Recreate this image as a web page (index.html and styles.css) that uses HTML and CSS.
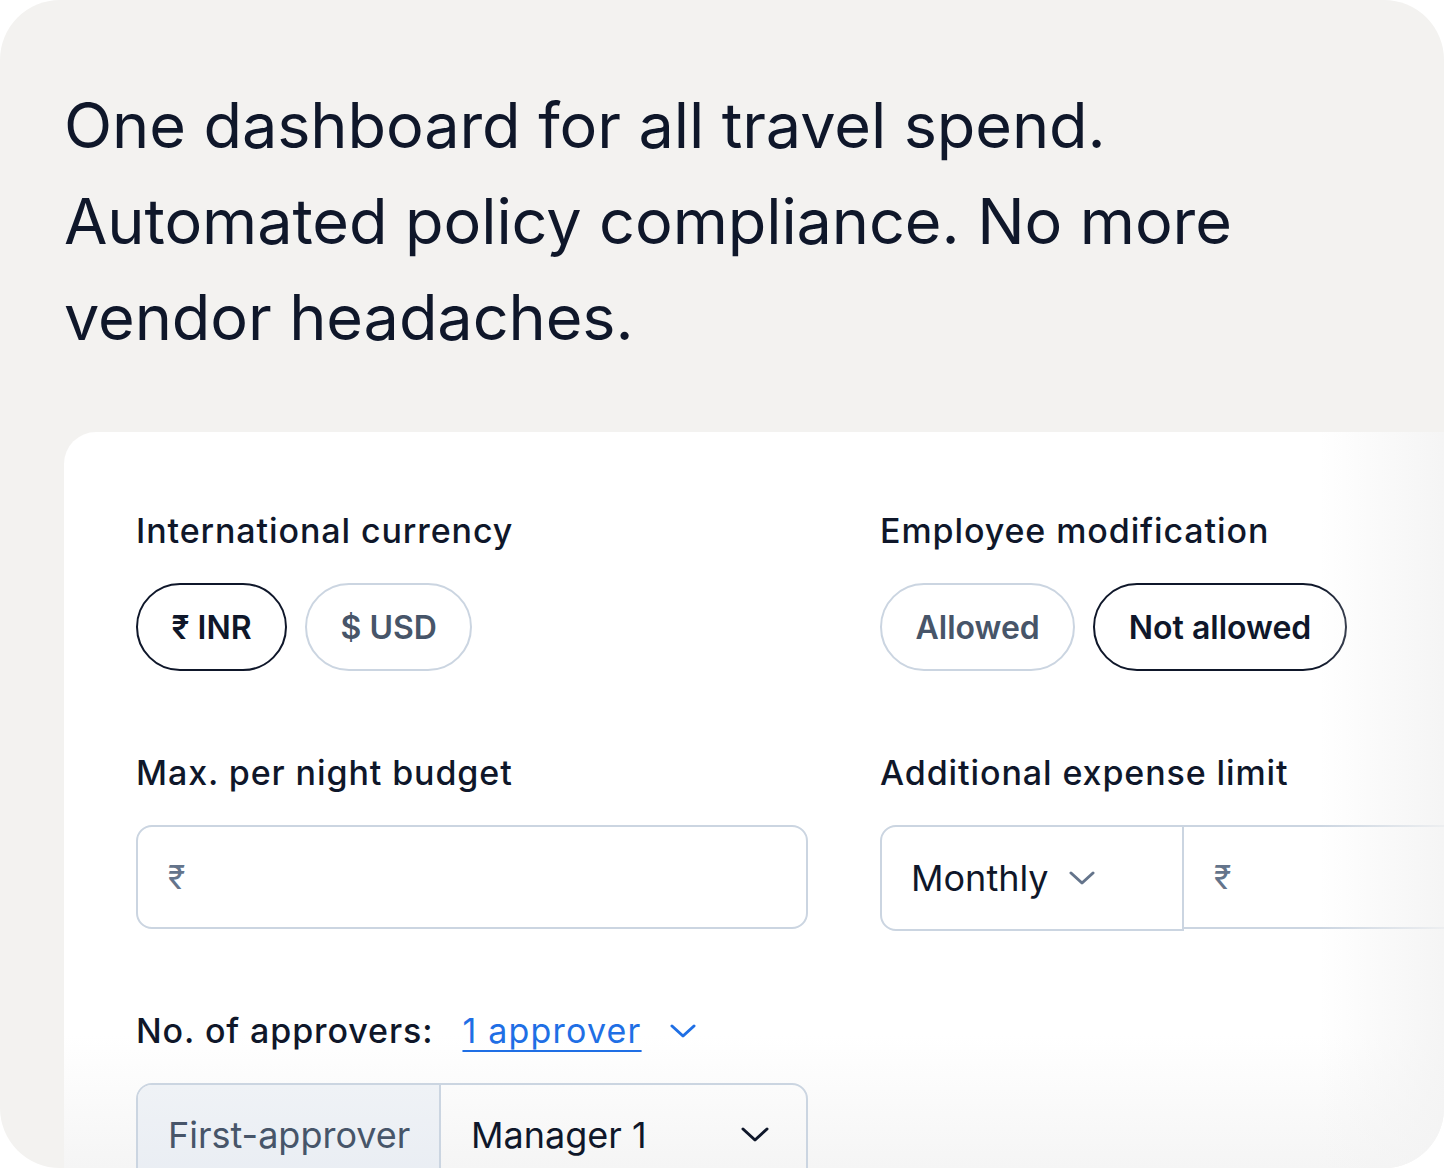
FILE: index.html
```html
<!DOCTYPE html>
<html lang="en">
<head>
<meta charset="utf-8">
<title>Travel policy</title>
<link rel="stylesheet" href="styles.css">
</head>
<body>
<div class="frame">
  <h1 class="headline">One dashboard for all travel spend.<br>Automated policy compliance. No more<br>vendor headaches.</h1>
  <section class="card">
    <div class="grid">
      <div class="field">
        <div class="label">International currency</div>
        <div class="pills">
          <button class="pill pill-on">₹ INR</button>
          <button class="pill">$ USD</button>
        </div>
      </div>
      <div class="field">
        <div class="label">Employee modification</div>
        <div class="pills">
          <button class="pill">Allowed</button>
          <button class="pill pill-on">Not allowed</button>
        </div>
      </div>
      <div class="field">
        <div class="label">Max. per night budget</div>
        <div class="input"><span class="cur">₹</span></div>
      </div>
      <div class="field">
        <div class="label">Additional expense limit</div>
        <div class="combo">
          <div class="select">
            <span>Monthly</span>
            <svg class="chev chev-gray" width="26" height="14" viewBox="0 0 26 14"><path d="M2 2 L13 12 L24 2" /></svg>
          </div>
          <div class="input input-joined"><span class="cur">₹</span></div>
        </div>
      </div>
      <div class="field">
        <div class="label label-row">
          <span>No. of approvers:</span>
          <a class="link" href="#">1 approver</a>
          <svg class="chev chev-blue" width="26" height="14" viewBox="0 0 26 14"><path d="M2 2 L13 12 L24 2" /></svg>
        </div>
        <div class="approver">
          <div class="approver-key">First-approver</div>
          <div class="approver-val">
            <span>Manager 1</span>
            <svg class="chev chev-dark" width="28" height="16" viewBox="0 0 28 16"><path d="M2 2 L14 13 L26 2" /></svg>
          </div>
        </div>
      </div>
    </div>
  </section>
</div>
</body>
</html>
```

FILE: styles.css
```css
* { box-sizing: border-box; }

html, body {
  margin: 0;
  padding: 0;
  background: #ffffff;
}

body {
  font-family: Inter, "Noto Sans", "Liberation Sans", sans-serif;
  color: #0f172a;
}

.frame {
  width: 1444px;
  height: 1168px;
  background: #f3f2f0;
  border-radius: 60px;
  overflow: hidden;
  display: flex;
  flex-direction: column;
  padding-top: 77px;
}

.headline {
  margin: 0 0 67px 64px;
  font-size: 63px;
  line-height: 96px;
  font-weight: 400;
  letter-spacing: -0.1px;
  color: #0f172a;
  white-space: nowrap;
}

.card {
  position: relative;
  flex: 1;
  min-height: 0;
  margin-left: 64px;
  background: linear-gradient(to bottom, #ffffff 82%, #f5f5f5 100%);
  border-radius: 32px 0 0 0;
  overflow: hidden;
  padding: 75px 0 0 72px;
}

.card::after {
  content: "";
  position: absolute;
  inset: 0;
  pointer-events: none;
  background: linear-gradient(to right, rgba(243, 243, 243, 0) 91%, rgba(243, 243, 243, 0.85) 100%);
}

.grid {
  display: grid;
  grid-template-columns: 672px 672px;
  column-gap: 72px;
  row-gap: 78px;
}

.field {
  display: flex;
  flex-direction: column;
}

.label {
  font-size: 34px;
  line-height: 48px;
  font-weight: 500;
  letter-spacing: 0.9px;
  color: #0f172a;
  margin-bottom: 28px;
  white-space: nowrap;
}

.label-row {
  display: flex;
  align-items: center;
}

.link {
  margin-left: 29px;
  color: #1f6fe5;
  text-decoration: underline;
  text-decoration-thickness: 2px;
  text-underline-offset: 7px;
  font-weight: 400;
  letter-spacing: 1.2px;
}

.chev {
  flex: none;
  fill: none;
  stroke-width: 3;
  stroke-linecap: round;
  stroke-linejoin: round;
}

.chev-blue { stroke: #1f6fe5; margin-left: 28px; }
.chev-gray { stroke: #64748b; }
.chev-dark { stroke: #0f172a; }

.pills {
  display: flex;
  gap: 18px;
}

.pill {
  height: 88px;
  padding: 0 33.5px;
  border: 2px solid #cbd5e1;
  border-radius: 44px;
  background: #ffffff;
  font-family: Inter, "Noto Sans", "Liberation Sans", sans-serif;
  font-size: 32px;
  font-weight: 600;
  color: #475569;
  white-space: nowrap;
}

.pill-on {
  border-color: #0f172a;
  color: #0f172a;
}

.input {
  height: 104px;
  border: 2px solid #cbd5e1;
  border-radius: 16px;
  display: flex;
  align-items: center;
  padding-left: 30px;
  background: #ffffff;
}

.cur {
  font-size: 32px;
  color: #64748b;
}

.combo {
  display: flex;
  align-items: flex-start;
  height: 104px;
}

.select {
  flex: none;
  width: 304px;
  height: 106px;
  border: 2px solid #cbd5e1;
  border-radius: 16px 0 0 16px;
  display: flex;
  align-items: center;
  gap: 20px;
  padding-left: 29px;
  font-size: 36px;
  color: #0f172a;
  background: #ffffff;
}

.input-joined {
  flex: 1;
  border-left: 0;
  border-radius: 0 16px 16px 0;
}

.approver {
  display: flex;
  height: 104px;
  border: 2px solid #cbd5e1;
  border-radius: 16px 16px 0 0;
  overflow: hidden;
  font-size: 36px;
}

.approver-key {
  flex: none;
  width: 303px;
  background: linear-gradient(to bottom, #eff2f6, #e9edf3);
  border-right: 2px solid #cbd5e1;
  display: flex;
  align-items: center;
  padding-left: 30px;
  color: #475569;
}

.approver-val {
  flex: 1;
  display: flex;
  align-items: center;
  justify-content: space-between;
  padding: 0 37px 0 30px;
  color: #0f172a;
}
```
